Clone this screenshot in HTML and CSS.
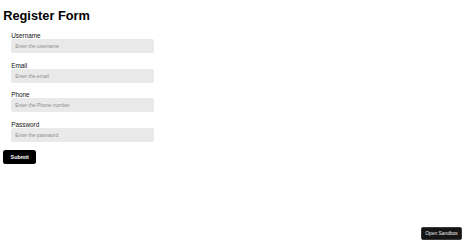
FILE: index.html
```html
<!DOCTYPE html>
<html lang="en">
<head>
<meta charset="utf-8">
<title>Register Form</title>
<link rel="stylesheet" href="styles.css">
</head>
<body>
  <h1 class="title">Register Form</h1>
  <form class="form">
    <div class="fields">
      <div class="field">
        <label class="label" for="username">Username</label>
        <input class="input" id="username" type="text" placeholder="Enter the username">
      </div>
      <div class="field">
        <label class="label" for="email">Email</label>
        <input class="input" id="email" type="email" placeholder="Enter the email">
      </div>
      <div class="field">
        <label class="label" for="phone">Phone</label>
        <input class="input" id="phone" type="tel" placeholder="Enter the Phone number">
      </div>
      <div class="field">
        <label class="label" for="password">Password</label>
        <input class="input" id="password" type="password" placeholder="Enter the password">
      </div>
    </div>
    <button class="submit" type="button">Submit</button>
  </form>
  <button class="sandbox" type="button">Open Sandbox</button>
</body>
</html>
```

FILE: styles.css
```css
html, body {
  background: #ffffff;
}
body {
  margin: 0;
  padding: 0 3.2px;
  font-family: "Liberation Sans", Arial, sans-serif;
  color: #000;
}
.title {
  font-size: 12.8px;
  font-weight: 700;
  line-height: 14.8px;
  margin: 8.6px 0 8.6px;
}
.fields {
  padding-left: 8px;
}
.field {
  margin-bottom: 8.2px;
}
.label {
  display: block;
  font-size: 6.4px;
  line-height: 7.35px;
  color: #111;
}
.input {
  display: block;
  box-sizing: border-box;
  width: 143px;
  height: 14px;
  border: none;
  border-radius: 2px;
  background: #e9e9e9;
  padding: 0 4px;
  margin: 0;
  font-family: "Liberation Sans", Arial, sans-serif;
  font-size: 5px;
  color: #333;
  outline: none;
}
.input::placeholder {
  color: #8c8c8c;
}
.submit {
  display: block;
  box-sizing: border-box;
  width: 33px;
  height: 14px;
  padding: 0;
  border: none;
  border-radius: 2.5px;
  background: #000;
  color: #fff;
  font-family: "Liberation Sans", Arial, sans-serif;
  font-size: 5.4px;
  font-weight: 700;
}
.sandbox {
  position: fixed;
  right: 12px;
  bottom: 8px;
  box-sizing: border-box;
  width: 41px;
  height: 13px;
  padding: 0;
  border: 1px solid #3a3a3a;
  border-radius: 2px;
  background: #151515;
  color: #f2f2f2;
  font-family: "Liberation Sans", Arial, sans-serif;
  font-size: 4.9px;
}
```
